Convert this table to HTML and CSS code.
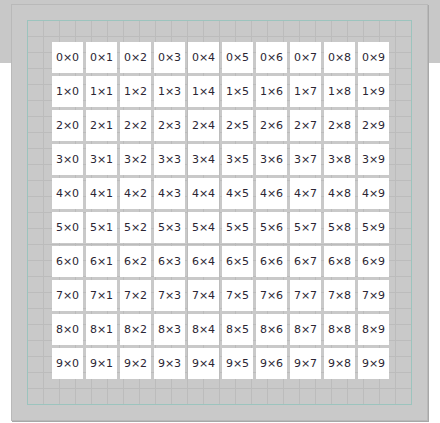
FILE: index.html
```html
<!DOCTYPE html>
<html>
<head>
<meta charset="utf-8">
<link rel="stylesheet" href="styles.css">
</head>
<body>
<div class="panel">
  <div class="board">
    <div class="table" id="table"></div>
  </div>
</div>
<script>
  var t = document.getElementById('table');
  var h = '';
  for (var r = 0; r < 10; r++) {
    for (var c = 0; c < 10; c++) {
      h += '<div class="cell">' + r + '\u00d7' + c + '</div>';
    }
  }
  t.innerHTML = h;
</script>
</body>
</html>
```

FILE: styles.css
```css
html, body {
  margin: 0;
  padding: 0;
}
body {
  width: 440px;
  height: 423px;
  background: linear-gradient(#c8c8c8 0, #c8c8c8 63px, #ffffff 63px);
  font-family: "DejaVu Sans", Verdana, sans-serif;
  overflow: hidden;
}
.panel {
  box-sizing: border-box;
  width: 417px;
  height: 417px;
  margin: 4px 0 0 11px;
  padding: 15px;
  background: #c9c9c9;
  border: 1px solid #b9b9b9;
  box-shadow: 1px 1px 0 #a8a8a8;
}
.board {
  box-sizing: border-box;
  width: 385px;
  height: 385px;
  border: 1px solid #9cc4be;
  background-color: #c9c9c9;
  background-image:
    linear-gradient(to right, #bcbcbc 1px, transparent 1px),
    linear-gradient(to bottom, #bcbcbc 1px, transparent 1px);
  background-size: 16px 16px;
  background-position: -1px -1px;
  padding: 21px 0 0 24px;
}
.table {
  display: grid;
  grid-template-columns: repeat(10, 31px);
  grid-auto-rows: 31px;
  gap: 3px;
}
.cell {
  background: #ffffff;
  display: flex;
  align-items: center;
  justify-content: center;
  font-size: 11px;
  color: #2b2533;
  white-space: nowrap;
}
```
